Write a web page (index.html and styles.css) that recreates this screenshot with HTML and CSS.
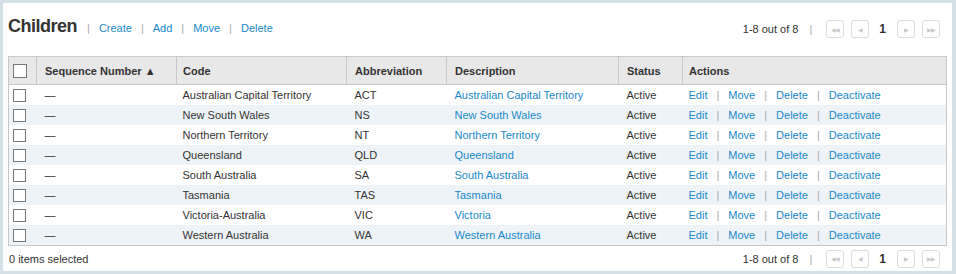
FILE: index.html
```html
<!DOCTYPE html>
<html lang="en">
<head>
    <meta charset="UTF-8">
    <title>Children</title>
    <link rel="stylesheet" href="styles.css">
</head>
<body>
    <div class="panel">
        <div class="toolbar">
            <div class="toolbar-left">
                <h2>Children</h2>
                <span class="sep">|</span><a href="#">Create</a>
                <span class="sep">|</span><a href="#">Add</a>
                <span class="sep">|</span><a href="#">Move</a>
                <span class="sep">|</span><a href="#">Delete</a>
            </div>
            <div class="pager">
                <span>1-8 out of 8</span>
                <span class="sep">|</span>
                <span class="pbtn">&#9664;&#9664;</span>
                <span class="pbtn">&#9664;</span>
                <span class="page">1</span>
                <span class="pbtn">&#9654;</span>
                <span class="pbtn">&#9654;&#9654;</span>
            </div>
        </div>

        <table class="grid">
            <colgroup>
                <col class="col-check">
                <col class="col-seq">
                <col class="col-code">
                <col class="col-abbr">
                <col class="col-desc">
                <col class="col-status">
                <col>
            </colgroup>
            <thead>
                <tr>
                    <th><span class="box"></span></th>
                    <th>Sequence Number &#9650;</th>
                    <th class="tight">Code</th>
                    <th>Abbreviation</th>
                    <th>Description</th>
                    <th>Status</th>
                    <th class="tight">Actions</th>
                </tr>
            </thead>
            <tbody id="rows"></tbody>
        </table>

        <div class="toolbar footer">
            <div class="toolbar-left">0 items selected</div>
            <div class="pager">
                <span>1-8 out of 8</span>
                <span class="sep">|</span>
                <span class="pbtn">&#9664;&#9664;</span>
                <span class="pbtn">&#9664;</span>
                <span class="page">1</span>
                <span class="pbtn">&#9654;</span>
                <span class="pbtn">&#9654;&#9654;</span>
            </div>
        </div>
    </div>

    <script>
        const regions = [
            ["Australian Capital Territory", "ACT", "Australian Capital Territory"],
            ["New South Wales", "NS", "New South Wales"],
            ["Northern Territory", "NT", "Northern Territory"],
            ["Queensland", "QLD", "Queensland"],
            ["South Australia", "SA", "South Australia"],
            ["Tasmania", "TAS", "Tasmania"],
            ["Victoria-Australia", "VIC", "Victoria"],
            ["Western Australia", "WA", "Western Australia"]
        ];

        const tbody = document.getElementById('rows');
        for (const [code, abbr, desc] of regions) {
            const tr = document.createElement('tr');
            tr.innerHTML = `
                <td><span class="box"></span></td>
                <td>&mdash;</td>
                <td class="tight">${code}</td>
                <td>${abbr}</td>
                <td><a href="#">${desc}</a></td>
                <td>Active</td>
                <td class="tight actions"><a href="#">Edit</a><span class="sep">|</span><a href="#">Move</a><span class="sep">|</span><a href="#">Delete</a><span class="sep">|</span><a href="#">Deactivate</a></td>
            `;
            tbody.appendChild(tr);
        }
    </script>
</body>
</html>
```

FILE: styles.css
```css
body {
    margin: 0;
    background: #d3e0e7;
    font-family: "Liberation Sans", Arial, sans-serif;
    font-size: 11px;
    color: #333;
}
.panel {
    margin: 3px 4px 3px 3px;
    height: 268px;
    background: #fff;
    padding: 0 5px;
    box-sizing: border-box;
}
a {
    color: #1a88c9;
    text-decoration: none;
}
.sep {
    color: #aaa;
    margin: 0 9px;
    font-size: 11px;
}
.toolbar {
    display: flex;
    align-items: center;
    justify-content: space-between;
    height: 53px;
    padding-bottom: 4px;
    box-sizing: border-box;
}
.toolbar-left {
    display: flex;
    align-items: center;
}
.toolbar-left .sep:first-of-type {
    margin-left: 10px;
}
h2 {
    margin: -2px 0 0 0;
    font-size: 18px;
    font-weight: bold;
    color: #333;
    letter-spacing: -0.5px;
}
.pager {
    display: flex;
    align-items: center;
    margin-right: 7px;
    padding-top: 3px;
}
.pager .sep {
    margin: 0 14px 0 11px;
}
.pbtn {
    width: 16px;
    height: 16px;
    border: 1px solid #dcdcdc;
    border-radius: 3px;
    margin-right: 7px;
    display: flex;
    align-items: center;
    justify-content: center;
    color: #c8c8c8;
    font-size: 6px;
    letter-spacing: -1px;
}
.pbtn:last-child {
    margin-right: 0;
}
.page {
    font-weight: bold;
    font-size: 12px;
    margin: 0 11px 0 3px;
}
.grid {
    width: 100%;
    table-layout: fixed;
    border-collapse: collapse;
    border: 1px solid #c8c8c8;
}
.grid th {
    background: #e8e8e8;
    height: 27px;
    text-align: left;
    font-weight: bold;
    color: #333;
    padding: 0 8px;
    border-right: 1px solid #c8c8c8;
    border-bottom: 1px solid #c8c8c8;
}
.grid th:last-child {
    border-right: none;
}
.grid td {
    height: 20px;
    padding: 0 8px;
    white-space: nowrap;
}
.grid .tight {
    padding-left: 6px;
}
.grid tbody tr:nth-child(even) {
    background: #eef3f8;
}
.col-check { width: 28px; }
.col-seq { width: 140px; }
.col-code { width: 170px; }
.col-abbr { width: 100px; }
.col-desc { width: 172px; }
.col-status { width: 64px; }
.grid th:first-child,
.grid td:first-child {
    padding: 0 0 0 4px;
}
.box {
    display: block;
    width: 11px;
    height: 11px;
    border: 1px solid #777;
    background: #fff;
}
th .box {
    width: 12px;
    height: 12px;
}
.actions .sep {
    margin: 0 9px;
}
.footer {
    height: 25px;
    padding-bottom: 0;
}
.footer .toolbar-left {
    padding-left: 1px;
}
.footer .pager {
    padding-top: 0;
}
```
